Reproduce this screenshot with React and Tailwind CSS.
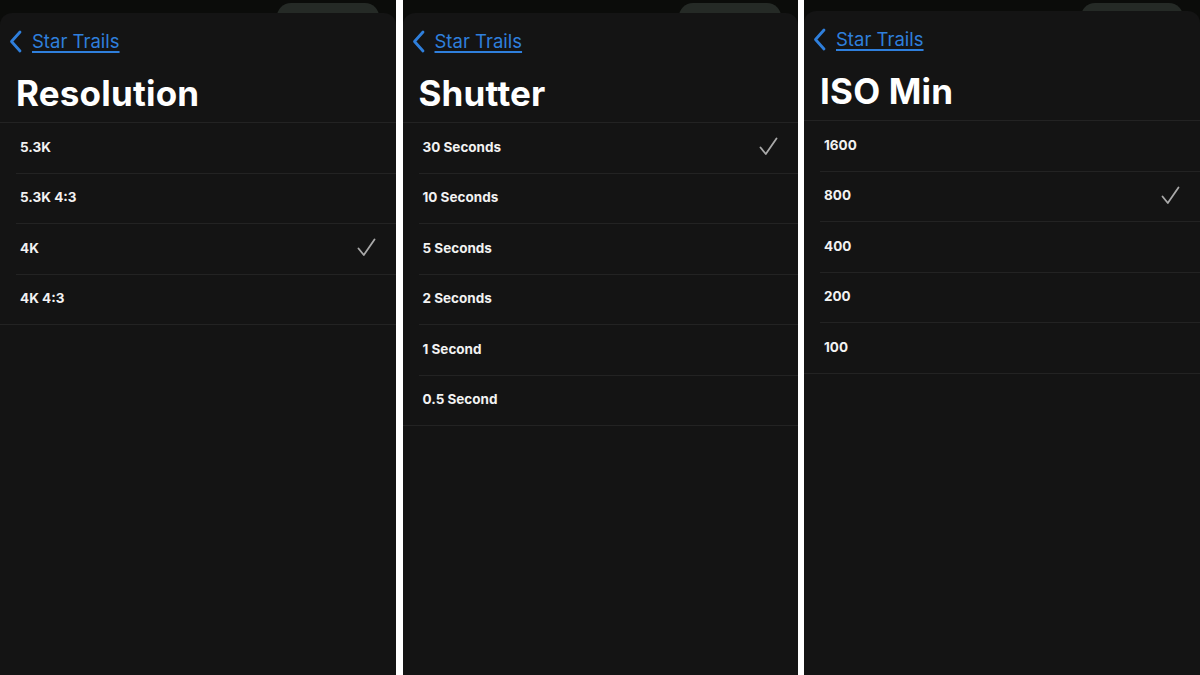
import React from "react";

const panels = [
  { title: "Resolution", items: ["5.3K", "5.3K 4:3", "4K", "4K 4:3"], checked: 2, top: "pt-[13px]", w: "w-[396px]" },
  { title: "Shutter", items: ["30 Seconds", "10 Seconds", "5 Seconds", "2 Seconds", "1 Second", "0.5 Second"], checked: 0, top: "pt-[13px]", w: "w-[395px]" },
  { title: "ISO Min", items: ["1600", "800", "400", "200", "100"], checked: 1, top: "pt-[11px]", w: "w-[396px]" },
];

function Check() {
  return (
    <svg width="19" height="19" viewBox="0 0 19 19" fill="none">
      <path d="M1.5 10.5 L6.8 17 L17.5 1.5" stroke="#a9a9a9" strokeWidth="1.8" strokeLinecap="round" strokeLinejoin="round" />
    </svg>
  );
}

function Chevron() {
  return (
    <svg width="13" height="23" viewBox="0 0 13 23" fill="none">
      <path d="M11 2 L2.5 11.5 L11 21" stroke="#2f7fdc" strokeWidth="2.8" strokeLinecap="round" strokeLinejoin="round" />
    </svg>
  );
}

function Panel({ p }) {
  return (
    <div className={`${p.w} h-full bg-[#0b0c0a] flex flex-col ${p.top} relative`}>
      <div className="absolute right-[17px] top-[3px] w-[102px] h-[20px] rounded-t-[14px] bg-[#252a26]" />
      <div className="relative flex-1 bg-[#141414] rounded-t-[12px] flex flex-col">
        <div className="flex items-center h-[24px] mt-[16px] pl-[9px] gap-[10px]">
          <Chevron />
          <span className="text-[18.5px] leading-[24px] text-[#2f7fdc] underline underline-offset-[3px] decoration-[1.5px]" style={{ fontFamily: "Inter, 'Liberation Sans', sans-serif" }}>
            Star Trails
          </span>
        </div>
        <div className="mt-[20px] pl-[16px] h-[40px] flex items-center text-[35px] font-bold text-white tracking-[0.2px]" style={{ fontFamily: "Inter, 'Liberation Sans', sans-serif" }}>
          {p.title}
        </div>
        <div className="mt-[9px] border-t border-[#232323]">
          {p.items.map((it, i) => (
            <div key={it} className={i < p.items.length - 1 ? "pl-[16px]" : ""}>
              <div className={`h-[50.5px] flex items-center justify-between pr-[20px] pb-[2px] border-b border-[#232323] ${i < p.items.length - 1 ? "pl-[4px]" : "pl-[20px]"}`}>
                <span className="text-[13.5px] font-bold text-[#f2f2f2]" style={{ fontFamily: "Inter, 'Liberation Sans', sans-serif" }}>{it}</span>
                {i === p.checked && <Check />}
              </div>
            </div>
          ))}
        </div>
      </div>
    </div>
  );
}

export default function App() {
  return (
    <div className="w-[1200px] h-[675px] bg-white flex justify-between overflow-hidden">
      {panels.map((p) => (
        <Panel key={p.title} p={p} />
      ))}
    </div>
  );
}
